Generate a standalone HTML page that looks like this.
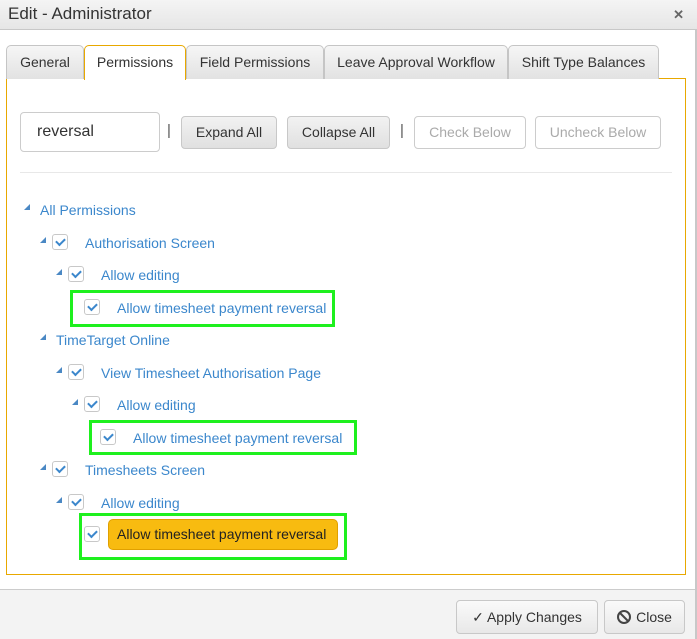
<!DOCTYPE html>
<html><head><style>
*{box-sizing:border-box;margin:0;padding:0}
body{width:697px;height:639px;overflow:hidden;background:#fff;font-family:"Liberation Sans",sans-serif;font-size:14px;color:#333;position:relative}
.a{position:absolute}
.title{left:0;top:0;width:697px;height:30px;background:linear-gradient(#f4f4f4,#e6e6e6);border-bottom:1px solid #c8c8c8;font-size:17px;line-height:28px;padding-left:8px;color:#333}
.x{right:13px;top:1px;line-height:28px;font-size:13px;color:#666;font-weight:bold}
.rb{right:0;top:30px;width:2px;height:609px;background:#c8c8c8}
.tab{top:45px;height:34px;border:1px solid #c5c5c5;border-bottom:none;border-radius:5px 5px 0 0;background:linear-gradient(#f6f6f6,#e2e2e2);text-align:center;line-height:32px;color:#333}
.tab.on{background:#fff;border-color:#e8a800;height:35px;z-index:2}
.panel{left:6px;top:78px;width:680px;height:497px;border:1px solid #e8a800}
.inp{left:20px;top:112px;width:140px;height:40px;border:1px solid #ccc;border-radius:4px;line-height:38px;padding-left:16px;font-size:16px}
.btn{top:116px;height:33px;border:1px solid #c8c8c8;border-radius:4px;background:linear-gradient(#f2f2f2,#e0e0e0);text-align:center;line-height:31px;color:#333}
.btn.d{background:#fff;color:#aaa;border-color:#ccc}
.bar{top:122px;color:#555;font-size:15px}
.sep{left:20px;top:172px;width:652px;height:1px;background:#e8e8e8}
.t{color:#3b87cc;line-height:18px}
.ar{width:0;height:0;border-left:6px solid transparent;border-bottom:6px solid #4a88c4}
.cb{width:16px;height:16px;border:1px solid #c8c8c8;border-radius:3px;background:#fff}
.cb::after{content:"";position:absolute;width:7px;height:4px;border-left:2px solid #3b87cc;border-bottom:2px solid #3b87cc;transform:rotate(-45deg);left:3px;top:3px}
.g{border:3px solid #1ef01e}
.hl{left:108px;top:519px;width:230px;height:31px;background:#f8bb10;border:1px solid #e0a000;border-radius:5px;color:#222;line-height:29px;padding-left:8px}
.foot{left:0;top:589px;width:695px;height:50px;background:#f3f3f3;border-top:1px solid #ccc}
.fb{top:600px;height:34px;border:1px solid #c8c8c8;border-radius:4px;background:linear-gradient(#fafafa,#e8e8e8);line-height:32px;text-align:center;color:#333}
</style></head><body>
<div class="a title">Edit - Administrator</div>
<div class="a x">✕</div>
<div class="a panel"></div>
<div class="a tab" style="left:6px;width:78px">General</div>
<div class="a tab on" style="left:84px;width:102px">Permissions</div>
<div class="a tab" style="left:186px;width:138px">Field Permissions</div>
<div class="a tab" style="left:324px;width:184px">Leave Approval Workflow</div>
<div class="a tab" style="left:508px;width:151px">Shift Type Balances</div>

<div class="a inp">reversal</div>
<div class="a bar" style="left:167px">|</div>
<div class="a btn" style="left:181px;width:96px">Expand All</div>
<div class="a btn" style="left:287px;width:103px">Collapse All</div>
<div class="a bar" style="left:400px">|</div>
<div class="a btn d" style="left:414px;width:112px">Check Below</div>
<div class="a btn d" style="left:535px;width:126px">Uncheck Below</div>
<div class="a sep"></div>

<div class="a ar" style="left:24px;top:204px"></div><div class="a t" style="left:40px;top:201px">All Permissions</div>

<div class="a ar" style="left:40px;top:237px"></div><div class="a cb" style="left:52px;top:234px"></div><div class="a t" style="left:85px;top:234px">Authorisation Screen</div>
<div class="a ar" style="left:56px;top:269px"></div><div class="a cb" style="left:68px;top:266px"></div><div class="a t" style="left:101px;top:266px">Allow editing</div>
<div class="a g" style="left:70px;top:290px;width:265px;height:37px"></div>
<div class="a cb" style="left:84px;top:299px"></div><div class="a t" style="left:117px;top:299px">Allow timesheet payment reversal</div>

<div class="a ar" style="left:40px;top:334px"></div><div class="a t" style="left:56px;top:331px">TimeTarget Online</div>
<div class="a ar" style="left:56px;top:367px"></div><div class="a cb" style="left:68px;top:364px"></div><div class="a t" style="left:101px;top:364px">View Timesheet Authorisation Page</div>
<div class="a ar" style="left:72px;top:399px"></div><div class="a cb" style="left:84px;top:396px"></div><div class="a t" style="left:117px;top:396px">Allow editing</div>
<div class="a g" style="left:89px;top:420px;width:268px;height:35px"></div>
<div class="a cb" style="left:100px;top:429px"></div><div class="a t" style="left:133px;top:429px">Allow timesheet payment reversal</div>

<div class="a ar" style="left:40px;top:464px"></div><div class="a cb" style="left:52px;top:461px"></div><div class="a t" style="left:85px;top:461px">Timesheets Screen</div>
<div class="a ar" style="left:56px;top:497px"></div><div class="a cb" style="left:68px;top:494px"></div><div class="a t" style="left:101px;top:494px">Allow editing</div>
<div class="a g" style="left:79px;top:513px;width:268px;height:47px"></div>
<div class="a cb" style="left:84px;top:526px"></div>
<div class="a hl">Allow timesheet payment reversal</div>

<div class="a rb"></div>
<div class="a foot"></div>
<div class="a fb" style="left:456px;width:142px">✓ Apply Changes</div>
<div class="a fb" style="left:604px;width:81px"><span style="display:inline-block;width:14px;height:14px;border:2px solid #444;border-radius:50%;position:relative;vertical-align:-2px;margin-right:5px"><span style="position:absolute;left:4px;top:-1px;width:2px;height:12px;background:#444;transform:rotate(-45deg)"></span></span>Close</div>
</body></html>
